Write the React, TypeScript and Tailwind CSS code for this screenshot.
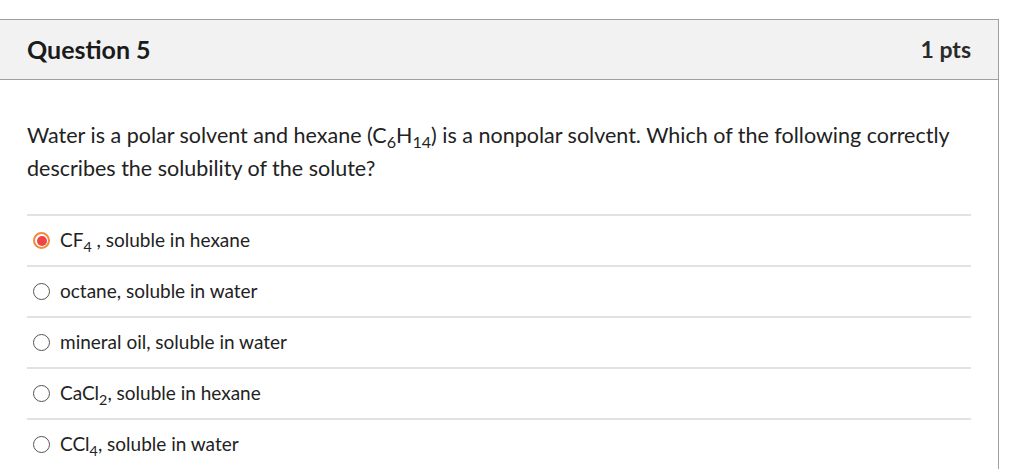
import React from "react";

function Sub({ children }: { children: React.ReactNode }) {
  return <span className="relative top-[5px] text-[0.75em] leading-none">{children}</span>;
}

const options = [
  { id: "a", label: <>CF<Sub>4</Sub> , soluble in hexane</>, checked: true },
  { id: "b", label: <>octane, soluble in water</>, checked: false },
  { id: "c", label: <>mineral oil, soluble in water</>, checked: false },
  { id: "d", label: <>CaCl<Sub>2</Sub>, soluble in hexane</>, checked: false },
  { id: "e", label: <>CCl<Sub>4</Sub>, soluble in water</>, checked: false },
];

function Radio({ checked }: { checked: boolean }) {
  if (checked) {
    return (
      <span className="flex h-[17px] w-[17px] items-center justify-center rounded-full border-2 border-[#f08a3e] bg-white">
        <span className="h-[10px] w-[10px] rounded-full bg-[#ef4444]" />
      </span>
    );
  }
  return <span className="block h-[17px] w-[17px] rounded-full border-[1.5px] border-[#555]" />;
}

export default function App() {
  return (
    <div className="h-[476px] overflow-hidden bg-white pt-[19px] font-['Lato',sans-serif] text-[#222]">
      <div className="w-[999px] border border-b-0 border-l-0 border-[#a0a0a0]">
        {/* Header */}
        <div className="flex h-[60px] items-center justify-between border-b border-[#a0a0a0] bg-[#f2f2f2] px-[27px] text-[#1b1b1b]">
          <h2 className="text-[25px] font-bold">Question 5</h2>
          <span className="text-[23px] font-bold text-[#2a2a2a]">1 pts</span>
        </div>

        {/* Body */}
        <div className="px-[27px] pt-[39px]">
          <p className="text-[21.5px] leading-[33px]">
            Water is a polar solvent and hexane (C<Sub>6</Sub>H<Sub>14</Sub>) is a nonpolar solvent. Which of the
            following correctly describes the solubility of the solute?
          </p>

          <div className="mt-[29px] w-[944px]">
            {options.map((o) => (
              <div
                key={o.id}
                className="flex h-[51px] items-center gap-[10px] border-t-2 border-[#e2e2e2] pl-[6px] text-[19px]"
              >
                <Radio checked={o.checked} />
                <span>{o.label}</span>
              </div>
            ))}
          </div>
        </div>
      </div>
    </div>
  );
}
